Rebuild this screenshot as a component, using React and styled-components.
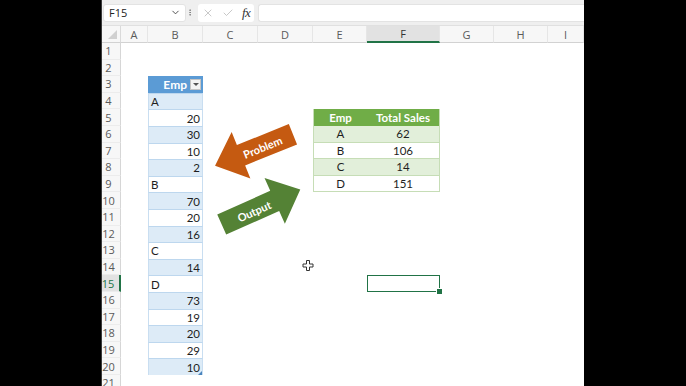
import React from 'react';
import styled, { createGlobalStyle, css } from 'styled-components';
import { ChevronDown, EllipsisVertical, X, Check } from 'lucide-react';

const COLS = ['A', 'B', 'C', 'D', 'E', 'F', 'G', 'H', 'I'];
const TEMPLATE = '19px 27px 55px 55px 55px 54px 73px 54px 54px 1fr';
const ROW_H = 16.6;

// Emp table: header in B3, values from row 4 down
const empValues = ['A', 20, 30, 10, 2, 'B', 70, 20, 16, 'C', 14, 'D', 73, 19, 20, 29, 10];
const totals = [['A', 62], ['B', 106], ['C', 14], ['D', 151]];

const cells = {};
cells.B3 = { v: 'Emp', kind: 'blueHead', align: 'right', filter: true };
empValues.forEach((v, i) => {
  const r = i + 4;
  cells[`B${r}`] = {
    v,
    kind: r % 2 === 0 ? 'blueBand' : 'blueWhite',
    align: typeof v === 'string' ? 'left' : 'right',
    handle: r === 20,
  };
});
cells.E5 = { v: 'Emp', kind: 'greenHead', align: 'center', edge: 'left' };
cells.F5 = { v: 'Total Sales', kind: 'greenHead', align: 'center', edge: 'right' };
totals.forEach(([emp, total], i) => {
  const r = i + 6;
  const kind = r % 2 === 0 ? 'greenBand' : 'greenWhite';
  cells[`E${r}`] = { v: emp, kind, align: 'center', edge: 'left' };
  cells[`F${r}`] = { v: total, kind, align: 'center', edge: 'right' };
});

const GlobalStyle = createGlobalStyle`
  html, body { margin: 0; padding: 0; background: #000; }
  body { font-family: Lato, "Liberation Sans", sans-serif; overflow: hidden; }
  * { box-sizing: border-box; }
`;

const Screen = styled.div`
  display: flex;
  width: 686px;
  height: 386px;
  background: #000;
`;

const Letterbox = styled.div`
  flex: 0 0 ${p => p.$w}px;
  background: #000;
`;

const Window = styled.div`
  position: relative;
  flex: 0 0 483px;
  display: flex;
  flex-direction: column;
  background: #fff;
  border-left: 1px solid #3b3b3b;
  overflow: hidden;
`;

const FormulaBar = styled.div`
  flex: 0 0 26px;
  display: flex;
  align-items: center;
  background: #efefef;
  border-bottom: 1px solid #e0e0e0;
`;

const NameBox = styled.div`
  display: flex;
  align-items: center;
  justify-content: space-between;
  width: 83px;
  height: 18px;
  margin-left: 1px;
  padding: 0 4px 0 5px;
  background: #fff;
  border: 1px solid #e3e3e3;
  border-radius: 3px;
  font: 11px "Open Sans", sans-serif;
  color: #222;
`;

const MoreDots = styled.div`
  width: 8px;
  display: flex;
  justify-content: center;
  color: #777;
`;

const EditButtons = styled.div`
  display: flex;
  align-items: center;
  gap: 8px;
  width: 56px;
  height: 18px;
  margin-left: 4px;
  padding-left: 4px;
  background: #fff;
  border-radius: 3px;
  color: #b5b5b5;
`;

const Fx = styled.span`
  font: italic 13px "Liberation Serif", serif;
  color: #333;
  letter-spacing: -0.5px;
`;

const FormulaInput = styled.div`
  flex: 1;
  height: 18px;
  margin-left: 4px;
  background: #fff;
  border: 1px solid #e3e3e3;
  border-right: none;
  border-radius: 3px 0 0 3px;
`;

const GridRow = styled.div`
  flex: 0 0 ${p => p.$h}px;
  display: grid;
  grid-template-columns: ${TEMPLATE};
`;

const Corner = styled.div`
  position: relative;
  background: #f7f7f7;
  border-right: 1px solid #dadada;
  border-bottom: 1px solid #d2d2d2;

  &::after {
    content: '';
    position: absolute;
    right: 3px;
    bottom: 3px;
    border-left: 9px solid transparent;
    border-bottom: 9px solid #d0d0d0;
  }
`;

const ColHead = styled.div`
  display: flex;
  align-items: center;
  justify-content: center;
  font: 11px "Open Sans", sans-serif;
  color: ${p => (p.$active ? '#333' : '#5a5a5a')};
  background: ${p => (p.$active ? '#e2e2e2' : '#f7f7f7')};
  border-right: 1px solid #e6e6e6;
  border-bottom: ${p => (p.$active ? '2px solid #217346' : '1px solid #d2d2d2')};
`;

const RowHead = styled.div`
  display: flex;
  align-items: center;
  justify-content: center;
  padding-right: 5px;
  font: 11px "Open Sans", sans-serif;
  color: ${p => (p.$active ? '#217346' : '#5a5a5a')};
  background: ${p => (p.$active ? '#e2e2e2' : '#f7f7f7')};
  border-right: ${p => (p.$active ? '2px solid #217346' : '1px solid #d6d6d6')};
  border-bottom: 1px solid #ececec;
`;

const KIND = {
  blueHead: css`
    background: #5b9bd5;
    color: #fff;
    font-weight: 700;
    font-size: 12px;
  `,
  blueBand: css`
    background: #ddebf7;
    border-top: 1px solid #bdd7ee;
    border-left: 1px solid #c9def1;
    border-right: 1px solid #c9def1;
  `,
  blueWhite: css`
    background: #fff;
    border-top: 1px solid #bdd7ee;
    border-left: 1px solid #c9def1;
    border-right: 1px solid #c9def1;
  `,
  greenHead: css`
    background: #70ad47;
    color: #fff;
    font-weight: 700;
  `,
  greenBand: css`
    background: #e2efda;
    border-bottom: 1px solid #c6ddb6;
  `,
  greenWhite: css`
    background: #fff;
    border-bottom: 1px solid #c6ddb6;
  `,
};

const JUSTIFY = { left: 'flex-start', right: 'flex-end', center: 'center' };

const Cell = styled.div`
  position: relative;
  display: flex;
  align-items: center;
  justify-content: ${p => JUSTIFY[p.$align] || 'flex-start'};
  padding: 0 2px;
  font-size: 11.5px;
  color: #1e1e1e;
  white-space: nowrap;
  ${p => KIND[p.$kind]}
  ${p => p.$edge === 'left' && css`border-left: 1px solid #c6ddb6;`}
  ${p => p.$edge === 'right' && css`border-right: 1px solid #c6ddb6;`}
  ${p =>
    p.$handle &&
    css`
      &::after {
        content: '';
        position: absolute;
        right: 0;
        bottom: 0;
        border-left: 4px solid transparent;
        border-bottom: 4px solid #4a84bd;
      }
    `}
  ${p =>
    p.$selected &&
    css`
      outline: 1.5px solid #217346;
      outline-offset: -1px;
      z-index: 1;
      &::after {
        content: '';
        position: absolute;
        right: -3px;
        bottom: -3px;
        width: 5px;
        height: 5px;
        background: #217346;
        border: 1px solid #fff;
      }
    `}
`;

const FilterButton = styled.span`
  display: inline-flex;
  align-items: center;
  justify-content: center;
  width: 11px;
  height: 11px;
  margin-left: 3px;
  background: #f4f4f4;
  border: 1px solid #c5c5c5;

  &::before {
    content: '';
    border-left: 3px solid transparent;
    border-right: 3px solid transparent;
    border-top: 3px solid #555;
  }
`;

const Overlay = styled.svg`
  position: absolute;
  left: 0;
  top: 0;
  pointer-events: none;
`;

const ArrowLabel = styled.text`
  font-family: Lato, "Liberation Sans", sans-serif;
  font-size: 11px;
  font-weight: 700;
  fill: #fff;
`;

const Arrow = ({ x, y, angle, color, label, points, labelX, labelY }) => (
  <g transform={`translate(${x} ${y}) rotate(${angle})`}>
    <polygon points={points} fill={color} />
    <ArrowLabel x={labelX} y={labelY} textAnchor="middle" dominantBaseline="central">
      {label}
    </ArrowLabel>
  </g>
);

const LEFT_ARROW = '-42,0 -14,-25 -14,-11 42,-11 42,11 -14,11 -14,25';
const RIGHT_ARROW = '-43,-11 15,-11 15,-25 43,0 15,25 15,11 -43,11';

const rows = Array.from({ length: 21 }, (_, i) => i + 1);

export default function App() {
  return (
    <>
      <GlobalStyle />
      <Screen>
        <Letterbox $w={101} />
        <Window>
          <FormulaBar>
            <NameBox>
              F15
              <ChevronDown size={11} color="#444" strokeWidth={2} />
            </NameBox>
            <MoreDots>
              <EllipsisVertical size={11} strokeWidth={2.5} />
            </MoreDots>
            <EditButtons>
              <X size={12} strokeWidth={1.5} />
              <Check size={12} strokeWidth={1.5} />
              <Fx>fx</Fx>
            </EditButtons>
            <FormulaInput />
          </FormulaBar>

          <GridRow $h={17}>
            <Corner />
            {COLS.map(c => (
              <ColHead key={c} $active={c === 'F'}>
                {c}
              </ColHead>
            ))}
          </GridRow>

          {rows.map(r => (
            <GridRow key={r} $h={ROW_H}>
              <RowHead $active={r === 15}>{r}</RowHead>
              {COLS.map(c => {
                const cell = cells[`${c}${r}`];
                const selected = c === 'F' && r === 15;
                if (!cell) return <Cell key={c} $selected={selected} />;
                return (
                  <Cell
                    key={c}
                    $kind={cell.kind}
                    $align={cell.align}
                    $edge={cell.edge}
                    $handle={cell.handle}
                  >
                    {cell.v}
                    {cell.filter && <FilterButton />}
                  </Cell>
                );
              })}
            </GridRow>
          ))}

          <Overlay width="482" height="386">
            <Arrow
              x={152}
              y={150}
              angle={-22}
              color="#c55a11"
              points={LEFT_ARROW}
              label="Problem"
              labelX={9}
              labelY={0.5}
            />
            <Arrow
              x={159}
              y={207}
              angle={-24}
              color="#548235"
              points={RIGHT_ARROW}
              label="Output"
              labelX={-8}
              labelY={1}
            />
            <path
              d="M204.5 260.5h3v3.5h3.5v3h-3.5v3.5h-3v-3.5H201v-3h3.5z"
              fill="#fff"
              stroke="#333"
              strokeWidth="1"
            />
          </Overlay>
        </Window>
        <Letterbox $w={102} />
      </Screen>
    </>
  );
}
